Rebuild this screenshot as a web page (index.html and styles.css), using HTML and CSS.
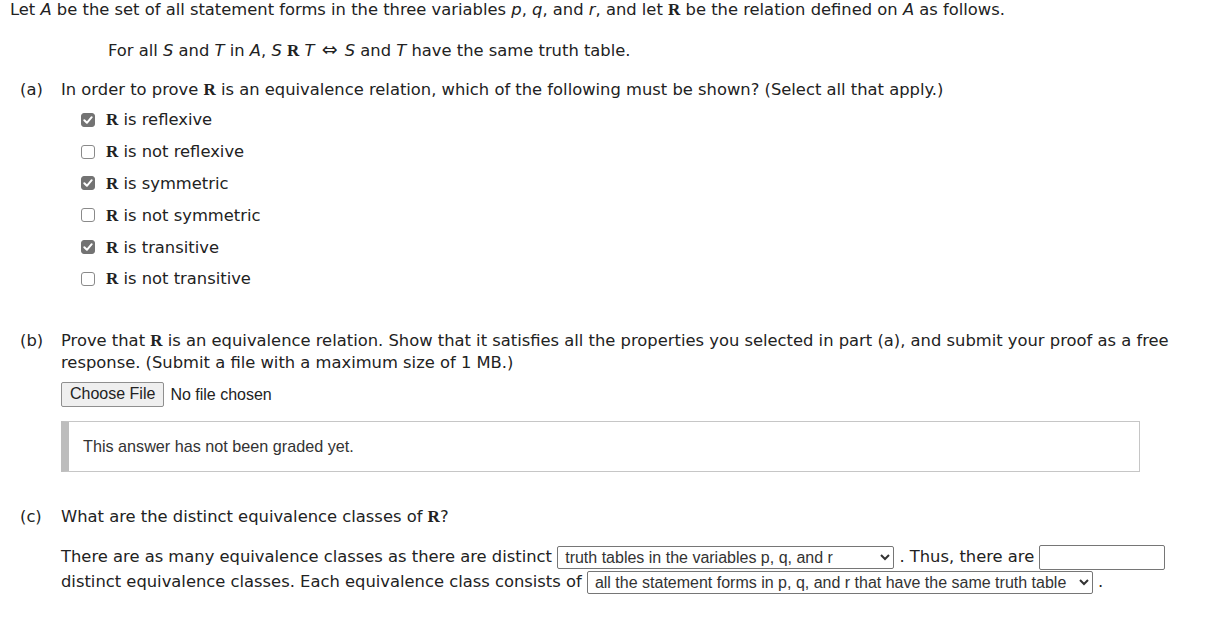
FILE: index.html
```html
<!DOCTYPE html>
<html lang="en">
<head>
<meta charset="utf-8">
<title>Equivalence relation</title>
<link rel="stylesheet" href="styles.css">
</head>
<body>
<div class="page">
  <p class="intro">Let <i>A</i> be the set of all statement forms in the three variables <i>p</i>, <i>q</i>, and <i>r</i>, and let <b class="R">R</b> be the relation defined on <i>A</i> as follows.</p>
  <p class="def">For all <i>S</i> and <i>T</i> in <i>A</i>, <i>S</i> <b class="R">R</b> <i>T</i> <span class="iff">&#8660;</span> <i>S</i> and <i>T</i> have the same truth table.</p>

  <div class="part part-a">
    <span class="plabel">(a)</span>
    <div class="pbody">
      <p class="q">In order to prove <b class="R">R</b> is an equivalence relation, which of the following must be shown? (Select all that apply.)</p>
      <ul class="opts">
        <li><span class="cb on"><svg viewBox="0 0 14 14" width="14" height="14"><path d="M3.3 7.2 L5.9 9.8 L10.7 4.2" fill="none" stroke="#fff" stroke-width="2" stroke-linecap="round" stroke-linejoin="round"/></svg></span><span class="opt"><b class="R">R</b> is reflexive</span></li>
        <li><span class="cb"></span><span class="opt"><b class="R">R</b> is not reflexive</span></li>
        <li><span class="cb on"><svg viewBox="0 0 14 14" width="14" height="14"><path d="M3.3 7.2 L5.9 9.8 L10.7 4.2" fill="none" stroke="#fff" stroke-width="2" stroke-linecap="round" stroke-linejoin="round"/></svg></span><span class="opt"><b class="R">R</b> is symmetric</span></li>
        <li><span class="cb"></span><span class="opt"><b class="R">R</b> is not symmetric</span></li>
        <li><span class="cb on"><svg viewBox="0 0 14 14" width="14" height="14"><path d="M3.3 7.2 L5.9 9.8 L10.7 4.2" fill="none" stroke="#fff" stroke-width="2" stroke-linecap="round" stroke-linejoin="round"/></svg></span><span class="opt"><b class="R">R</b> is transitive</span></li>
        <li><span class="cb"></span><span class="opt"><b class="R">R</b> is not transitive</span></li>
      </ul>
    </div>
  </div>

  <div class="part part-b">
    <span class="plabel">(b)</span>
    <div class="pbody">
      <p class="q">Prove that <b class="R">R</b> is an equivalence relation. Show that it satisfies all the properties you selected in part (a), and submit your proof as a free response. (Submit a file with a maximum size of 1 MB.)</p>
      <div class="filerow"><input type="file" class="file"></div>
      <div class="graded">This answer has not been graded yet.</div>
    </div>
  </div>

  <div class="part part-c">
    <span class="plabel">(c)</span>
    <div class="pbody">
      <p class="q">What are the distinct equivalence classes of <b class="R">R</b>?</p>
      <p class="ans">There are as many equivalence classes as there are distinct <select class="sel sel1"><option>truth tables in the variables p, q, and r</option></select> . Thus, there are <input type="text" class="num"> distinct equivalence classes. Each equivalence class consists of <select class="sel sel2"><option>all the statement forms in p, q, and r that have the same truth table</option></select> . </p>
    </div>
  </div>
</div>
</body>
</html>
```

FILE: styles.css
```css
html, body {
  margin: 0;
  padding: 0;
  background: #fff;
}
body {
  font-family: "DejaVu Sans", Verdana, sans-serif;
  font-size: 16.35px;
  color: #222;
}
.page {
  padding-left: 10px;
  padding-top: 1px;
}
p {
  margin: 0;
}
i {
  font-style: italic;
}
.R {
  font-family: "Liberation Serif", "Times New Roman", serif;
  font-weight: bold;
  font-size: 17px;
  line-height: 1;
}
.intro {
  line-height: 18px;
}
.def {
  margin-top: 21px;
  margin-left: 98px;
  line-height: 22px;
}
.iff {
  font-size: 19px;
  line-height: 1;
  margin: 0 2px;
}
.part {
  display: flex;
  margin-left: 10px;
}
.plabel {
  width: 41px;
  flex: none;
  line-height: 22px;
}
.pbody {
  flex: 1;
}
.q {
  line-height: 22px;
}
.part-a {
  margin-top: 17px;
}
.opts {
  list-style: none;
  margin: 3px 0 0 0;
  padding: 0 0 0 20px;
}
.opts li {
  height: 31.8px;
  display: flex;
  align-items: center;
  gap: 11px;
}
.cb {
  width: 14px;
  height: 14px;
  box-sizing: border-box;
  border: 1px solid #8a8a8a;
  border-radius: 3px;
  background: #fff;
  display: inline-flex;
  flex: none;
}
.cb.on {
  background: #737373;
  border-color: #737373;
}
.cb svg {
  display: block;
  margin: -1px;
}
.part-b {
  margin-top: 35px;
  padding-right: 30px;
}
.filerow {
  margin-top: 8px;
  height: 25px;
  display: flex;
  align-items: center;
}
.file {
  font-family: "Liberation Sans", Arial, sans-serif;
  font-size: 16px;
  color: #222;
}
.file::file-selector-button {
  font-family: "Liberation Sans", Arial, sans-serif;
  font-size: 16px;
  color: #222;
  height: 25px;
  padding: 0 8px;
  margin-right: 6px;
  border: 1px solid #8f8f8f;
  border-radius: 2px;
  background: #efefef;
}
.graded {
  margin-top: 14px;
  width: 1079px;
  height: 51px;
  box-sizing: border-box;
  border: 1px solid #c6c6c6;
  border-left: 8px solid #bdbdbd;
  padding-left: 14px;
  display: flex;
  align-items: center;
  font-family: "Liberation Sans", Arial, sans-serif;
  font-size: 16.2px;
  color: #333;
}
.part-c {
  margin-top: 34px;
}
.ans {
  margin-top: 17px;
  line-height: 24px;
}
.sel {
  font-family: "Liberation Sans", Arial, sans-serif;
  font-size: 16px;
  color: #333;
  height: 23px;
  border: 1px solid #767676;
  border-radius: 2px;
  background: #fff;
  padding: 0 3px;
  vertical-align: middle;
}
.sel1 {
  width: 337px;
}
.sel2 {
  width: 506px;
}
.num {
  width: 126px;
  height: 25px;
  box-sizing: border-box;
  border: 1px solid #767676;
  border-radius: 2px;
  vertical-align: middle;
}
```
